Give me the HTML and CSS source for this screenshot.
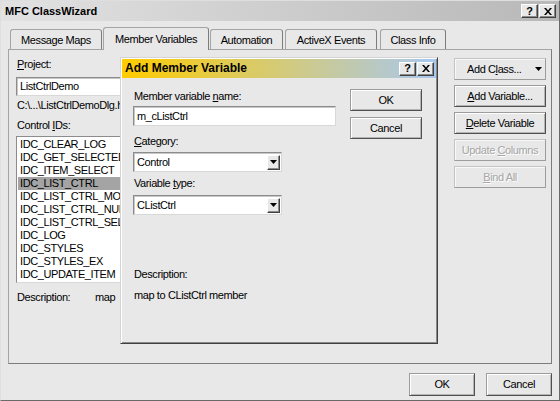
FILE: index.html
```html
<!DOCTYPE html>
<html>
<head>
<meta charset="utf-8">
<title>MFC ClassWizard</title>
<link rel="stylesheet" href="styles.css">
</head>
<body>
<div class="window">
  <div class="titlebar">
    <span class="title">MFC ClassWizard</span>
    <div class="capbtns">
      <span class="capbtn help">?</span>
      <span class="capbtn close"><svg width="8" height="7" viewBox="0 0 8 7"><path d="M0 0H2L4 2.4L6 0H8L5 3.5L8 7H6L4 4.6L2 7H0L3 3.5Z" fill="#000"/></svg></span>
    </div>
  </div>
  <div class="main">
    <div class="tabs">
      <div class="tab tab-msg">Message Maps</div>
      <div class="tab tab-sel">Member Variables</div>
      <div class="tab tab-auto">Automation</div>
      <div class="tab tab-ax">ActiveX Events</div>
      <div class="tab tab-info">Class Info</div>
    </div>
    <div class="panel">
      <div class="leftcol">
        <div class="lbl"><u>P</u>roject:</div>
        <div class="field proj">ListCtrlDemo</div>
        <div class="path">C:\...\ListCtrlDemoDlg.h</div>
        <div class="lbl ids">Control <u>I</u>Ds:</div>
        <div class="listbox">
          <div class="item">IDC_CLEAR_LOG</div>
          <div class="item">IDC_GET_SELECTED</div>
          <div class="item">IDC_ITEM_SELECT</div>
          <div class="item selected">IDC_LIST_CTRL</div>
          <div class="item">IDC_LIST_CTRL_MODE</div>
          <div class="item">IDC_LIST_CTRL_NUM</div>
          <div class="item">IDC_LIST_CTRL_SEL</div>
          <div class="item">IDC_LOG</div>
          <div class="item">IDC_STYLES</div>
          <div class="item">IDC_STYLES_EX</div>
          <div class="item">IDC_UPDATE_ITEM</div>
        </div>
        <div class="descrow"><span class="desclbl">Description:</span><span>map</span></div>
      </div>
      <div class="rightcol">
        <div class="btn btn-light btn-menu"><span>Add C<u>l</u>ass...</span><svg width="7" height="4" viewBox="0 0 7 4"><path d="M0 0H7L3.5 4Z" fill="#000"/></svg></div>
        <div class="btn"><span><u>A</u>dd Variable...</span></div>
        <div class="btn"><span><u>D</u>elete Variable</span></div>
        <div class="btn btn-light disabled"><span>Update <u>C</u>olumns</span></div>
        <div class="btn btn-light disabled"><span><u>B</u>ind All</span></div>
      </div>
    </div>
    <div class="footer">
      <div class="btn foot">OK</div>
      <div class="btn foot">Cancel</div>
    </div>
  </div>

  <div class="dialog">
    <div class="dtitle">
      <span class="dtitle-text">Add Member Variable</span>
      <div class="capbtns">
        <span class="capbtn help">?</span>
        <span class="capbtn close"><svg width="8" height="7" viewBox="0 0 8 7"><path d="M0 0H2L4 2.4L6 0H8L5 3.5L8 7H6L4 4.6L2 7H0L3 3.5Z" fill="#000"/></svg></span>
      </div>
    </div>
    <div class="dbody">
      <div class="form">
        <div class="flbl first">Member variable <u>n</u>ame:</div>
        <div class="field name">m_cListCtrl</div>
        <div class="flbl cat"><u>C</u>ategory:</div>
        <div class="combo cat-combo"><span class="combo-text">Control</span><span class="arrow"><svg width="7" height="4" viewBox="0 0 7 4"><path d="M0 0H7L3.5 4Z" fill="#000"/></svg></span></div>
        <div class="flbl vt">Variable <u>t</u>ype:</div>
        <div class="combo vt-combo"><span class="combo-text">CListCtrl</span><span class="arrow"><svg width="7" height="4" viewBox="0 0 7 4"><path d="M0 0H7L3.5 4Z" fill="#000"/></svg></span></div>
        <div class="flbl dlbl">Description:</div>
        <div class="flbl dtext">map to CListCtrl member</div>
      </div>
      <div class="dbtns">
        <div class="btn dbtn">OK</div>
        <div class="btn dbtn cancel">Cancel</div>
      </div>
    </div>
  </div>
</div>
</body>
</html>
```
FILE: styles.css
```css
* { box-sizing: border-box; }
html, body { margin: 0; padding: 0; }
body {
  width: 560px;
  height: 401px;
  overflow: hidden;
  background: #e8e8e8;
  font-family: "Liberation Sans", Arial, sans-serif;
  font-size: 11px;
  line-height: 13px;
  letter-spacing: -0.4px;
  color: #000;
}
u { text-decoration: underline; text-underline-offset: 1px; }

.window {
  position: relative;
  width: 560px;
  height: 401px;
  background: #e8e8e8;
  border: 1px solid;
  border-color: #dedede #6a6a6a #6a6a6a #dedede;
  display: flex;
  flex-direction: column;
}

.titlebar {
  height: 20px;
  display: flex;
  align-items: center;
  justify-content: space-between;
  padding: 0 3px 0 4px;
  background: linear-gradient(to right, #e2e2e2, #b8b8b8);
}
.title { font-weight: bold; letter-spacing: 0; font-size: 11px; }

.capbtns { display: flex; gap: 1px; }
.capbtn {
  width: 17px;
  height: 14px;
  display: flex;
  align-items: center;
  justify-content: center;
  background: #e8e8e8;
  border: 1px solid;
  border-color: #ffffff #404040 #404040 #ffffff;
  box-shadow: inset -1px -1px #8a8a8a;
  font-weight: bold;
  font-size: 11px;
  letter-spacing: 0;
  line-height: 12px;
}
.capbtn.help { padding-bottom: 1px; }

.main {
  flex: 1;
  display: flex;
  flex-direction: column;
  padding: 6px 7px 0 7px;
}

.tabs {
  display: flex;
  align-items: flex-end;
  height: 22px;
  position: relative;
  z-index: 2;
}
.tab {
  height: 20px;
  border: 1px solid;
  border-bottom: none;
  border-color: #a4a4a4 #7c7c7c #a4a4a4 #a4a4a4;
  border-radius: 3px 3px 0 0;
  background: #e8e8e8;
  display: flex;
  align-items: center;
  justify-content: center;
  padding-top: 2px;
}
.tab-msg { width: 92px; margin-left: 2px; }
.tab-sel { width: 106px; margin-left: 1px; height: 23px; margin-bottom: -1px; padding-top: 0; }
.tab-auto { width: 73px; margin-left: 1px; }
.tab-ax { width: 92px; margin-left: 2px; }
.tab-info { width: 66px; margin-left: 3px; }

.panel {
  height: 315px;
  border: 1px solid;
  border-color: #a4a4a4 #7c7c7c #7c7c7c #a4a4a4;
  display: flex;
  padding: 8px 5px 0 7px;
}
.leftcol {
  width: 105px;
  overflow: hidden;
  white-space: nowrap;
  padding-left: 1px;
}
.lbl { height: 13px; }
.field {
  background: #fff;
  border: 1px solid;
  border-color: #8c8c8c #d8d8d8 #d8d8d8 #8c8c8c;
  box-shadow: inset 1px 1px #c8c8c8;
  display: flex;
  align-items: center;
  padding-left: 3px;
}
.proj { width: 190px; height: 19px; margin-top: 6px; margin-left: -1px; }
.path { margin-top: 3px; }
.ids { margin-top: 7px; }
.listbox {
  width: 200px;
  margin-top: 4px;
  margin-left: -1px;
  background: #fff;
  border: 1px solid;
  border-color: #8c8c8c #d8d8d8 #d8d8d8 #8c8c8c;
  padding: 1px;
}
.item { height: 13px; padding-left: 2px; }
.item.selected { background: #a4a4a4; }
.descrow { margin-top: 8px; display: flex; }
.desclbl { width: 78px; flex: none; }

.rightcol {
  margin-left: auto;
  width: 92px;
  display: flex;
  flex-direction: column;
  gap: 5px;
}
.btn {
  height: 22px;
  display: flex;
  align-items: center;
  justify-content: center;
  background: #e8e8e8;
  border: 1px solid;
  border-color: #9c9c9c #505050 #505050 #9c9c9c;
  box-shadow: inset 1px 1px #ffffff, inset -1px -1px #b4b4b4;
}
.btn-light {
  border-color: #c4c4c4 #9c9c9c #9c9c9c #c4c4c4;
  box-shadow: inset 1px 1px #f8f8f8;
}
.btn-menu { justify-content: flex-start; padding-left: 12px; }
.btn-menu svg { margin-left: 13px; }
.disabled { color: #a6a6a6; text-shadow: 1px 1px #ffffff; }

.footer {
  display: flex;
  justify-content: flex-end;
  gap: 11px;
  margin-top: 9px;
}
.foot { width: 66px; height: 23px; }

.dialog {
  position: absolute;
  left: 119px;
  top: 56px;
  width: 318px;
  height: 287px;
  z-index: 5;
  background: #e8e8e8;
  border: 1px solid;
  border-color: #d4d4d4 #404040 #404040 #d4d4d4;
  box-shadow: inset 1px 1px #ffffff, inset -1px -1px #8a8a8a;
  padding: 1px;
}
.dtitle {
  height: 19px;
  display: flex;
  align-items: center;
  justify-content: space-between;
  padding: 0 2px 0 3px;
  background: linear-gradient(to right, #ffcc00, #a8c8f0);
}
.dtitle-text { font-weight: bold; font-size: 12px; letter-spacing: 0; }

.dbody {
  display: flex;
  padding-left: 11px;
}
.form { width: 203px; }
.flbl { height: 13px; padding-left: 1px; white-space: nowrap; }
.flbl.first { margin-top: 12px; }
.name { height: 20px; margin-top: 3px; width: 203px; }
.cat { margin-top: 9px; }
.combo {
  width: 149px;
  height: 20px;
  margin-top: 4px;
  background: #fff;
  border: 1px solid;
  border-color: #8c8c8c #d8d8d8 #d8d8d8 #8c8c8c;
  box-shadow: inset 1px 1px #c8c8c8;
  display: flex;
  align-items: center;
  justify-content: space-between;
  padding: 0 1px 0 3px;
}
.arrow {
  width: 13px;
  height: 15px;
  display: flex;
  align-items: center;
  justify-content: center;
  background: #e8e8e8;
  border: 1px solid;
  border-color: #ffffff #404040 #404040 #ffffff;
  box-shadow: inset -1px -1px #8a8a8a;
}
.vt { margin-top: 5px; }
.vt-combo { margin-top: 5px; }
.dlbl { margin-top: 53px; }
.dtext { margin-top: 8px; }

.dbtns {
  margin-left: 14px;
  padding-top: 11px;
  display: flex;
  flex-direction: column;
}
.dbtn { width: 72px; height: 22px; }
.dbtn.cancel { margin-top: 6px; }
```
